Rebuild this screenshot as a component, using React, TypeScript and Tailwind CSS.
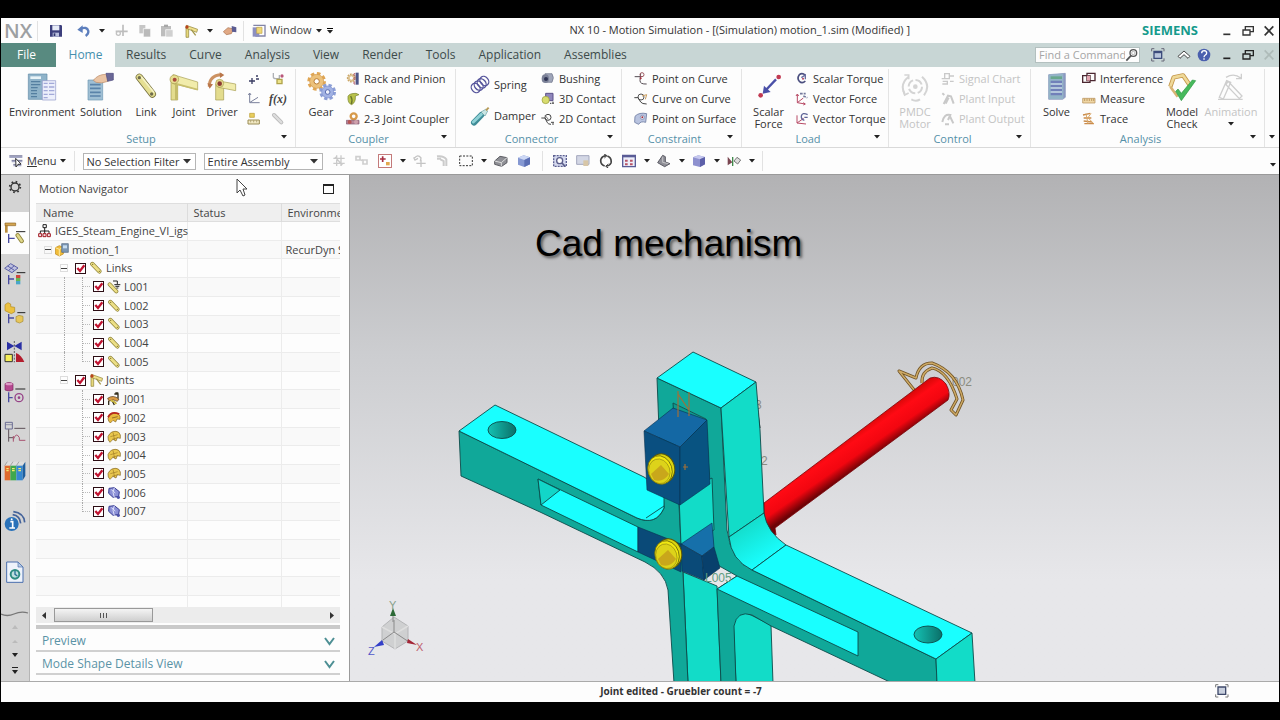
import { useState, type ReactNode } from 'react';

type TreeRow = {
    name: string;
    level: number;
    icon: string;
    env?: string;
    last?: boolean;
};

const rows: TreeRow[] = [
    { name: 'IGES_Steam_Engine_VI_igs', level: 0, icon: 'assembly' },
    { name: 'motion_1', level: 1, icon: 'motion', env: 'RecurDyn Solver' },
    { name: 'Links', level: 2, icon: 'link' },
    { name: 'L001', level: 3, icon: 'linkFixed' },
    { name: 'L002', level: 3, icon: 'link' },
    { name: 'L003', level: 3, icon: 'link' },
    { name: 'L004', level: 3, icon: 'link' },
    { name: 'L005', level: 3, icon: 'link', last: true },
    { name: 'Joints', level: 2, icon: 'joint' },
    { name: 'J001', level: 3, icon: 'jointFixed' },
    { name: 'J002', level: 3, icon: 'revoluteDriven' },
    { name: 'J003', level: 3, icon: 'revolute' },
    { name: 'J004', level: 3, icon: 'revolute' },
    { name: 'J005', level: 3, icon: 'revolute' },
    { name: 'J006', level: 3, icon: 'cylinder' },
    { name: 'J007', level: 3, icon: 'cylinder', last: true },
];

const tabs = ['Results', 'Curve', 'Analysis', 'View', 'Render', 'Tools', 'Application', 'Assemblies'];

// three drawing units per pixel
function Svg({ s, children, className = '' }: { s: number; children: ReactNode; className?: string }) {
    return (
        <svg width={s} height={s} viewBox={`0 0 ${s * 3} ${s * 3}`} fill="none" className={`shrink-0 ${className}`} aria-hidden="true">
            {children}
        </svg>
    );
}

function Arrow() {
    return (
        <svg width="6" height="4" viewBox="0 0 6 4" className="shrink-0" aria-hidden="true">
            <path d="M0 0h6L3 3.6z" fill="#222" />
        </svg>
    );
}

function Sep() {
    return <span className="h-5 w-px shrink-0 bg-[#e2e2e2]" />;
}

/* small icons, 14px */

const icons: Record<string, ReactNode> = {
    assembly: (
        <g stroke="#222" strokeWidth="3">
            <path d="M15 2h10v9H15zM20 11v12M7 28v-7h26v7M20 20v8" />
            <path d="M2 29h9v9H2zM15 29h9v9h-9zM28 29h9v9h-9z" stroke="#a01822" fill="#f7e5e5" />
        </g>
    ),
    motion: (
        <g>
            <path d="M1 14l12-6 12 5v20l-12 6-12-6z" fill="#f1bd3a" stroke="#b98313" strokeWidth="2" />
            <path d="M1 14l12 5 12-6M13 19v20" stroke="#fbe8a2" strokeWidth="3" />
            <path d="M20 2h20v26H20z" fill="#7d98b5" stroke="#51657d" strokeWidth="2" />
            <path d="M24 7h12v9H24z" fill="#c7dcf0" />
        </g>
    ),
    link: (
        <g>
            <path d="M10 9L31 31" stroke="#8d8136" strokeWidth="13" strokeLinecap="round" />
            <path d="M10 9L31 31" stroke="#ecdf86" strokeWidth="9" strokeLinecap="round" />
            <circle cx="11" cy="10" r="2" fill="#7a6d25" />
            <circle cx="31" cy="31" r="2" fill="#7a6d25" />
        </g>
    ),
    linkFixed: (
        <g>
            <path d="M8 13L28 34" stroke="#8d8136" strokeWidth="12" strokeLinecap="round" />
            <path d="M8 13L28 34" stroke="#ecdf86" strokeWidth="8" strokeLinecap="round" />
            <path d="M18 3h13v10M22 14h18M25 19h12M28 24h6" stroke="#222" strokeWidth="3" />
        </g>
    ),
    joint: (
        <g>
            <path d="M6 40V9h8v31z" fill="#e7d97c" stroke="#8d8136" strokeWidth="2" />
            <path d="M7 4l34 12-3 9L6 13z" fill="#efe08c" stroke="#8d8136" strokeWidth="2" />
            <path d="M22 17l13 17" stroke="#a3984b" strokeWidth="4" />
            <circle cx="9" cy="9" r="5" fill="#b8441e" />
        </g>
    ),
    jointFixed: (
        <g>
            <path d="M2 19q16-12 34 2l-5 7q-12-8-25-1z" fill="#d99a45" stroke="#4e3210" strokeWidth="2" />
            <path d="M5 27v12M15 25l7 14M22 6h11v13M25 3h9" stroke="#332d1b" strokeWidth="4" />
            <path d="M11 26q10 0 17 10" stroke="#cbb73f" strokeWidth="5" />
        </g>
    ),
    revolute: (
        <g>
            <path d="M3 20Q10 3 27 4q10 1 13 11v10l-9-2-4 10-9-5-9 9-5-7z" fill="#e9c74d" stroke="#80621c" strokeWidth="2" />
            <path d="M10 20l22-6M15 28l18-5M18 7l5 24" stroke="#9f7a24" strokeWidth="2" />
        </g>
    ),
    revoluteDriven: (
        <g>
            <path d="M3 23Q8 6 27 7q10 1 12 9v9l-9-1-4 9-8-5-8 8-5-6z" fill="#e9b93f" stroke="#80621c" strokeWidth="2" />
            <path d="M3 19Q12-1 37 9" stroke="#b8281d" strokeWidth="5" />
            <path d="M15 21l17-4" stroke="#6e4a17" strokeWidth="2" />
        </g>
    ),
    cylinder: (
        <g>
            <path d="M6 7l16-2 15 12-2 14-17 3L5 22z" fill="#8b90d6" stroke="#353a92" strokeWidth="3" />
            <path d="M13 11l12 10M22 5l-4 14 4 16" stroke="#dcdff8" strokeWidth="3" />
            <circle cx="34" cy="34" r="5" fill="#4b50a8" />
        </g>
    ),
    pointConstruct: <path d="M6 27h18M15 18v18M27 12h6M27 21h9" stroke="#3a3d63" strokeWidth="4" />,
    marker: (
        <g strokeWidth="4">
            <path d="M7 3v12q0 5 8 5h10V9" stroke="#aeb1b5" />
            <path d="M18 22h15v13H18z" fill="#ece38a" stroke="#b1a44c" />
            <circle cx="33" cy="12" r="5" fill="#b9577a" />
        </g>
    ),
    axes: <path d="M8 4v28h30M9 31l24-15M4 9l4-6 4 6" stroke="#7b819c" strokeWidth="3" />,
    sensor: (
        <g>
            <path d="M8 4h14v12H8z" fill="#e8ce5e" stroke="#b99a2e" strokeWidth="2" />
            <path d="M3 24h34v12H3z" fill="#f2e9c4" stroke="#9a8c55" strokeWidth="3" />
            <path d="M11 25v6M20 25v6M29 25v6" stroke="#9a8c55" strokeWidth="2" />
        </g>
    ),
    greyLink: (
        <g>
            <path d="M9 9l22 22" stroke="#b9b9b9" strokeWidth="12" strokeLinecap="round" />
            <path d="M9 9l22 22" stroke="#dedede" strokeWidth="7" strokeLinecap="round" />
        </g>
    ),
    rack: (
        <g>
            <circle cx="16" cy="18" r="10" stroke="#cba768" strokeWidth="7" strokeDasharray="5 2" />
            <circle cx="16" cy="18" r="7" stroke="#dcc18e" strokeWidth="4" />
            <path d="M29 2h9v36h-9z" fill="#4e5687" />
            <path d="M28 5h-4v6h4M28 17h-4v6h4M28 30h-4v6h4" stroke="#b56570" strokeWidth="3" />
        </g>
    ),
    cable: (
        <g>
            <path d="M6 13q4-9 24-9l9 4-11 4q2 19-11 26Q4 34 6 13z" fill="#b8c24a" stroke="#75802a" strokeWidth="2" />
            <path d="M14 12q7 12 2 24" stroke="#68742a" strokeWidth="4" />
        </g>
    ),
    coupler: (
        <g>
            <circle cx="23" cy="13" r="9" stroke="#d79a4b" strokeWidth="7" />
            <path d="M1 25h38v11H1z" fill="#b8869a" stroke="#7f566d" strokeWidth="2" />
            <circle cx="11" cy="30" r="6" fill="#b75555" />
            <circle cx="30" cy="30" r="6" fill="#cfa1ac" />
        </g>
    ),
    bushing: (
        <g>
            <path d="M12 5h21q8 12 0 26H13z" fill="#9fa5b9" stroke="#6b7186" strokeWidth="2" />
            <ellipse cx="13" cy="20" rx="11" ry="13" fill="#7b8197" />
            <circle cx="15" cy="21" r="6" fill="#2f3454" />
        </g>
    ),
    contact3d: (
        <g>
            <path d="M14 4h22v22H14z" fill="#8f86bb" stroke="#5b5189" strokeWidth="3" />
            <circle cx="14" cy="24" r="11" fill="#d8dc6f" stroke="#949936" strokeWidth="2" />
            <path d="M27 34h4M34 34h4M36 29v6" stroke="#333" strokeWidth="3" />
        </g>
    ),
    contact2d: (
        <g stroke="#444" strokeWidth="3">
            <circle cx="21" cy="16" r="9" />
            <path d="M1 18h11l7 14q3 5 11 5M30 31h9M33 36h6" />
            <path d="M12 10l10 12" stroke="#777" />
        </g>
    ),
    pointCurve: (
        <g strokeWidth="3">
            <path d="M2 14h20M20 4l-2 22q0 11 20 10" stroke="#544b52" />
            <circle cx="24" cy="8" r="6" stroke="#9d5a62" />
            <circle cx="20" cy="19" r="3" fill="#b02a39" />
        </g>
    ),
    curveCurve: (
        <g strokeWidth="3">
            <circle cx="21" cy="15" r="9" stroke="#555" />
            <path d="M1 17h11l8 13q4 6 18 6" stroke="#444" />
            <path d="M24 12l14-4-4 14" stroke="#c99b5b" />
        </g>
    ),
    pointSurface: (
        <g>
            <path d="M3 13Q15 0 38 5l-3 26q-15-5-21 6L2 31z" fill="#b9c4e0" stroke="#7f8cae" strokeWidth="3" />
            <circle cx="25" cy="16" r="6" fill="#fff" stroke="#6d79a3" strokeWidth="2" />
            <circle cx="25" cy="16" r="3" fill="#9c2c41" />
        </g>
    ),
    scalarTorque: (
        <g strokeWidth="5">
            <path d="M31 10Q22 1 13 8q-8 10 0 20 9 8 18-1" stroke="#4b4f7f" />
            <path d="M19 17l12-8v13" stroke="#6a6ea1" strokeWidth="4" />
            <circle cx="24" cy="20" r="3" fill="#b4435c" />
        </g>
    ),
    vectorForce: (
        <g strokeWidth="3">
            <path d="M7 8v24l23 4M7 32l18-14" stroke="#b84b66" />
            <path d="M3 12l4-6 4 6M25 32l6 4-6 3" stroke="#b84b66" />
            <path d="M15 5h17M25 12l12 5" stroke="#74799c" strokeWidth="5" strokeDasharray="8 3" />
        </g>
    ),
    vectorTorque: (
        <g strokeWidth="3">
            <path d="M6 10v23l27 3M6 33l20-14" stroke="#b84b66" />
            <path d="M38 8Q22 0 19 12q-1 10 9 13M28 16h10" stroke="#5f6598" strokeWidth="4" />
        </g>
    ),
    signal: <path d="M2 20h9V5h14v15H13M25 12h14M5 28h14v8H4M27 28h11" stroke="#c9c9c9" strokeWidth="4" />,
    plantIn: <path d="M4 4l6 5M8 36l13-25 9 2 8 22M14 35l9-18" stroke="#c9c9c9" strokeWidth="6" />,
    plantOut: <path d="M4 30Q9 4 28 9l-7 15M25 9l12 25M12 37h12" stroke="#c9c9c9" strokeWidth="6" />,
    interference: (
        <g strokeWidth="4">
            <path d="M2 11h22v20H2z" stroke="#4b2731" />
            <path d="M15 4h24v22H15z" stroke="#4b2731" />
            <path d="M15 11h9v15h-9z" fill="#e4a6b1" />
        </g>
    ),
    measure: (
        <g>
            <path d="M2 19h37v14H2z" fill="#efd6a4" stroke="#b28b52" strokeWidth="2" />
            <path d="M8 20v7M15 20v7M22 20v7M29 20v7M35 20v7" stroke="#a87b3e" strokeWidth="2" />
        </g>
    ),
    trace: (
        <g stroke="#c98b4b" strokeWidth="4">
            <path d="M3 9l22-5M5 18h23M5 27l25 3M7 35h29" />
            <path d="M12 5l6 30M27 4l-9 13 17 18" stroke="#dba968" strokeWidth="3" />
        </g>
    ),
};

function Small({ name }: { name: string }) {
    return <Svg s={14}>{icons[name]}</Svg>;
}

/* large ribbon icons, 30px */

const big: Record<string, ReactNode> = {
    environment: (
        <g>
            <path d="M4 6h56v76H4z" fill="#8fb3c9" stroke="#628ca8" strokeWidth="2" />
            <path d="M10 13h32v8H10z" fill="#e8f3f7" />
            <path d="M12 29h28M12 38h28M12 47h20M12 56h18M12 65h18M12 74h18" stroke="#547fa0" strokeWidth="4" />
            <path d="M46 26h40v58H46z" fill="#eceffb" stroke="#8f97c9" strokeWidth="2" />
            <path d="M50 34h12M66 34h16M50 45h12M66 45h16M50 56h12M66 56h16M50 67h12M66 67h16M50 77h12" stroke="#a2a9d8" strokeWidth="4" />
        </g>
    ),
    solution: (
        <g>
            <path d="M6 24h44v60H6z" fill="#9fbfd4" stroke="#6e98b4" strokeWidth="2" />
            <path d="M12 38h32M12 49h32M12 61h32M12 72h32" stroke="#5a83a9" strokeWidth="5" />
            <path d="M22 25q14-18 37-18l11 7-4 14q-20 8-36 3z" fill="#eac4a4" stroke="#b98a67" strokeWidth="2" />
            <path d="M60 4h22v20l-17 4z" fill="#6a6796" stroke="#4b487b" strokeWidth="2" />
        </g>
    ),
    link: (
        <g>
            <path d="M25 16L64 66" stroke="#77713f" strokeWidth="22" strokeLinecap="round" />
            <path d="M25 16L64 66" stroke="#e5df92" strokeWidth="17" strokeLinecap="round" />
            <path d="M32 16L68 60" stroke="#f5f2c4" strokeWidth="5" strokeLinecap="round" />
            <circle cx="25" cy="17" r="5" fill="#6f6c4c" />
            <circle cx="62" cy="66" r="5" fill="#6f6c4c" />
        </g>
    ),
    joint: (
        <g>
            <path d="M6 84V22h20v62z" fill="#e3dc8e" stroke="#a59c4e" strokeWidth="2" />
            <path d="M18 84V30h8v54z" fill="#c5bc69" />
            <path d="M12 8l74 22v24L10 34z" fill="#f1ecab" stroke="#a59c4e" strokeWidth="2" />
            <path d="M12 30l74 20v5L10 35z" fill="#c9c06d" />
            <circle cx="16" cy="22" r="13" fill="#e7dd91" stroke="#a59c4e" strokeWidth="2" />
            <circle cx="17" cy="23" r="6" fill="#a94a3b" />
        </g>
    ),
    driver: (
        <g>
            <path d="M26 84V36h24v48z" fill="#e3dc8e" stroke="#a59c4e" strokeWidth="2" />
            <path d="M30 26l56 10v20L34 46z" fill="#f1ecab" stroke="#a59c4e" strokeWidth="2" />
            <circle cx="38" cy="34" r="12" fill="#e7dd91" stroke="#a59c4e" strokeWidth="2" />
            <circle cx="38" cy="35" r="7" fill="#8c3a33" />
            <path d="M7 44Q6 10 44 8" stroke="#cc9262" strokeWidth="9" />
            <path d="M1 34l7 16 10-13zM38 1l14 8-13 9z" fill="#b9764a" />
        </g>
    ),
    gear: (
        <g>
            <circle cx="32" cy="28" r="22" stroke="#e0a654" strokeWidth="12" strokeDasharray="10 7.28" />
            <circle cx="32" cy="28" r="21" fill="#ecc17b" stroke="#d19a50" strokeWidth="2" />
            <circle cx="32" cy="28" r="8" fill="#fff" stroke="#b97d37" strokeWidth="3" />
            <circle cx="65" cy="60" r="19" stroke="#8d9fd6" strokeWidth="12" strokeDasharray="9 5.92" />
            <circle cx="65" cy="60" r="18" fill="#a2b2e3" stroke="#7b8fcf" strokeWidth="2" />
            <circle cx="65" cy="60" r="7" fill="#eef1fc" stroke="#5d70b2" strokeWidth="3" />
        </g>
    ),
    scalar: (
        <g>
            <path d="M66 22L33 57" stroke="#4a50a8" strokeWidth="7" />
            <path d="M26 65l4-24 20 19z" fill="#4a50a8" />
            <circle cx="74" cy="15" r="7" fill="#c23a52" />
            <circle cx="20" cy="70" r="7" fill="#c23a52" />
        </g>
    ),
    pmdc: (
        <g stroke="#d4d4d4" strokeWidth="6">
            <path d="M26 14Q-2 36 14 66M66 14Q94 40 72 70M34 82Q48 90 60 82" />
            <circle cx="46" cy="44" r="20" strokeDasharray="24 7.4" />
            <circle cx="46" cy="44" r="4" fill="#d4d4d4" />
            <path d="M26 22V9H13M10 56l4 13 12-6" strokeWidth="5" />
        </g>
    ),
    solve: (
        <g>
            <path d="M20 8l50-4v72l-8 6H20z" fill="#8e9bc3" stroke="#8493ba" strokeWidth="2" />
            <path d="M20 8l44-3v76H20z" fill="#93b4c7" />
            <path d="M26 13h34v8H26z" fill="#68a78d" />
            <path d="M26 30h34M26 42h34M26 54h34M26 66h34" stroke="#7180b9" strokeWidth="7" />
            <path d="M26 36h34M26 48h34M26 60h34" stroke="#dce6f4" strokeWidth="3" />
        </g>
    ),
    check: (
        <g>
            <path d="M10 44L20 16 48 10 70 42" stroke="#c3964a" strokeWidth="13" strokeLinejoin="round" />
            <path d="M10 44L20 16 48 10 70 42" stroke="#efd998" strokeWidth="8" strokeLinejoin="round" />
            <path d="M10 44L32 74" stroke="#d8b573" strokeWidth="8" />
            <path d="M26 58l17 28L86 26 76 24 43 64 33 51z" fill="#47b95c" stroke="#2f9a45" strokeWidth="2" />
        </g>
    ),
    animation: (
        <g stroke="#cecece" strokeWidth="4">
            <path d="M10 76l22-50 12 5-22 50zM36 28l42 44-8 8-40-42z" />
            <path d="M30 16q24-14 44 2M76 5v15H60M6 82h74" />
        </g>
    ),
};

function BigButton({ icon, label, width, disabled, menu }: { icon: string; label: string; width: string; disabled?: boolean; menu?: boolean }) {
    return (
        <button disabled={disabled} className={`flex shrink-0 flex-col items-center pt-[3px] leading-3 whitespace-pre-line ${width} ${disabled ? 'text-[#c4c4c4]' : ''}`}>
            <Svg s={30} className="mb-1">{big[icon]}</Svg>
            {label}
            {menu && <span className="mt-1 text-black"><Arrow /></span>}
        </button>
    );
}

function RowButton({ icon, label, disabled }: { icon: string; label: string; disabled?: boolean }) {
    return (
        <button disabled={disabled} className={`flex h-5 items-center gap-1 whitespace-nowrap ${disabled ? 'text-[#c4c4c4]' : ''}`}>
            <Small name={icon} />
            {label}
        </button>
    );
}

function Group({ title, width, children }: { title: string; width: string; children: ReactNode }) {
    return (
        <section className={`flex shrink-0 flex-col border-r border-[#e4e4e4] ${width}`}>
            <div className="flex h-[63px] items-start">{children}</div>
            <div className="flex h-4 items-center">
                <h2 className="flex-1 text-center text-[#5590a8]">{title}</h2>
                <button aria-label={`${title} options`} className="flex h-4 w-[14px] items-start pt-1"><Arrow /></button>
            </div>
        </section>
    );
}

function TitleBar() {
    return (
        <header className="flex h-[25px] shrink-0 items-center bg-[#fdfdfd]">
            <span className="w-9 pl-[3px] text-[20px] font-semibold text-[#9da0a2]">NX</span>
            <Sep />
            <div className="flex items-center">
                <button aria-label="Save" className="flex w-9 justify-center">
                    <Svg s={14}><path d="M3 3h34l2 3v32H3z" fill="#3c3f7c" /><path d="M10 4h21v15H10z" fill="#e6ebf7" /><path d="M11 26h19v12H11z" fill="#b9bfdd" /><path d="M14 28h5v8h-5z" fill="#2f3269" /></Svg>
                </button>
                <button aria-label="Undo" className="flex w-5 justify-center">
                    <Svg s={14}><path d="M10 15q20-9 24 6 1 9-8 15" stroke="#5d7fbd" strokeWidth="7" /><path d="M1 17L17 4v23z" fill="#5d7fbd" /></Svg>
                </button>
                <button aria-label="Undo list" className="flex w-4 justify-center"><Arrow /></button>
                <button aria-label="Cut" className="flex w-6 justify-center">
                    <Svg s={14}><path d="M24 2v34M2 22h36" stroke="#bdbdbd" strokeWidth="5" /><circle cx="10" cy="28" r="6" stroke="#c2c2c2" strokeWidth="4" /></Svg>
                </button>
                <button aria-label="Copy" className="flex w-[22px] justify-center">
                    <Svg s={14}><path d="M4 3h18v25H4z" fill="#c6c6c6" /><path d="M16 14h22v25H16z" fill="#bababa" stroke="#fff" strokeWidth="2" /></Svg>
                </button>
                <button aria-label="Paste" className="flex w-[22px] justify-center">
                    <Svg s={14}><path d="M3 6h30v31H3z" fill="#bdbdbd" /><path d="M12 2h12v7H12z" fill="#a7a7a7" /><path d="M17 17h22v22H17z" fill="#d0d0d0" stroke="#fff" strokeWidth="2" /></Svg>
                </button>
                <button aria-label="Joint" className="flex w-[26px] justify-center"><Small name="joint" /></button>
                <button aria-label="Joint list" className="flex w-3 justify-center"><Arrow /></button>
                <button aria-label="Touch" className="flex w-[27px] justify-center">
                    <Svg s={14}><path d="M1 23l14-12 17 4-7 14-15 3z" fill="#e1a985" stroke="#a8714f" strokeWidth="2" /><path d="M26 6l14 4v15l-13-2z" fill="#5b5c92" /></Svg>
                </button>
            </div>
            <Sep />
            <button className="flex items-center gap-1 pl-2 text-[11px] text-[#444]">
                <Svg s={14}><path d="M4 4h35v32H10" stroke="#8284a6" strokeWidth="4" /><path d="M2 10h20v28H2z" fill="#8c8fc0" /><path d="M14 10h16v18H14z" fill="#f0d876" stroke="#bfa145" strokeWidth="2" /></Svg>
                Window <Arrow />
            </button>
            <button aria-label="Customize" className="flex w-4 flex-col items-center gap-px">
                <span className="h-px w-[6px] bg-black" /><Arrow />
            </button>
            <h1 className="flex-1 text-center text-[11px] text-[#333]">NX 10 - Motion Simulation - [(Simulation) motion_1.sim (Modified) ]</h1>
            <strong className="text-[13px] text-[#159a8c]">SIEMENS</strong>
            <div className="flex items-center pl-[18px] text-[#333]">
                <WindowButtons />
            </div>
        </header>
    );
}

function WindowButtons({ dim }: { dim?: boolean }) {
    return (
        <>
            <button aria-label="Minimize" className="flex w-[21px] justify-center">
                <Svg s={12}><path d="M7 28h21" stroke="currentColor" strokeWidth="5" /></Svg>
            </button>
            <button aria-label="Restore" className="flex w-[21px] justify-center">
                <Svg s={12}><path d="M3 15h21v15H3zM10 14V5h24v15h-9" stroke="currentColor" strokeWidth="4" /></Svg>
            </button>
            <button aria-label="Close" className={`flex w-[21px] justify-center ${dim ? 'text-[#aebbb9]' : ''}`}>
                <Svg s={12}><path d="M5 4l26 27M31 4L5 31" stroke="currentColor" strokeWidth="5" /></Svg>
            </button>
        </>
    );
}

function TabBar() {
    return (
        <nav className="flex h-6 shrink-0 bg-[#c8d6d5] text-[12px] text-[#3d4a4a]">
            <button className="w-[55px] bg-[#588a80] pr-1 text-white">File</button>
            <button className="w-[59px] bg-[#fdfdfd] text-[#4590ae]">Home</button>
            {tabs.map((tab) => (
                <button key={tab} className="pr-3 pl-[11px]">{tab}</button>
            ))}
            <div className="ml-auto flex items-center">
                <label className="flex h-4 w-[105px] items-center border border-[#b3c0bf] bg-[#fdfdfd] pl-[3px] text-[11px]">
                    <input aria-label="Find a Command" placeholder="Find a Command" className="min-w-0 flex-1 outline-none placeholder:text-[#a5a5a5]" />
                    <Svg s={14}><circle cx="25" cy="15" r="10" stroke="#555" strokeWidth="4" /><circle cx="25" cy="15" r="5" stroke="#999" strokeWidth="2" /><path d="M18 23L4 38" stroke="#555" strokeWidth="5" /></Svg>
                </label>
                <button aria-label="Full Screen" className="flex w-9 justify-center">
                    <Svg s={14}><path d="M2 10V2h8M31 2h8v8M39 31v8h-8M10 39H2v-8" stroke="#667" strokeWidth="3" /><path d="M9 10h23v21H9z" fill="#b9c6dc" stroke="#3d4d7c" strokeWidth="4" /><path d="M9 13h23" stroke="#3d4d7c" strokeWidth="5" /></Svg>
                </button>
                <button aria-label="Minimize Ribbon" className="flex w-4 justify-center">
                    <Svg s={14}><path d="M3 25L21 9l18 16-6 6-12-11L9 31z" fill="#fdfdfd" stroke="#444" strokeWidth="3" /></Svg>
                </button>
                <button aria-label="Help" className="flex w-6 justify-center">
                    <Svg s={14}><circle cx="21" cy="21" r="19" fill="#4a5fae" /><path d="M14 16q0-8 8-8 7 1 7 7 0 4-4 6t-4 7M21 31v4" stroke="#fff" strokeWidth="4" /></Svg>
                </button>
                <div className="flex text-[#222]"><WindowButtons dim /></div>
            </div>
        </nav>
    );
}

function Ribbon() {
    return (
        <div className="flex h-[81px] shrink-0 overflow-hidden border-b border-[#d9d9d9] bg-[#fdfdfd] pt-[2px] text-[11px] text-[#333]">
            <Group title="Setup" width="w-[295px]">
                <BigButton icon="environment" label="Environment" width="ml-[7px] w-[68px]" />
                <BigButton icon="solution" label="Solution" width="w-[50px]" />
                <BigButton icon="link" label="Link" width="w-10" />
                <BigButton icon="joint" label="Joint" width="w-9" />
                <BigButton icon="driver" label="Driver" width="w-10" />
                <div className="ml-[2px] grid grid-cols-2 gap-x-1">
                    {['pointConstruct', 'marker', 'axes', 'fx', 'sensor', 'greyLink'].map((name) => (
                        <button key={name} aria-label={name} className="flex h-5 w-5 items-center justify-center">
                            {name === 'fx' ? <i className="font-['Liberation_Serif',serif] text-[12px] font-bold text-[#444]">f(x)</i> : <Small name={name} />}
                        </button>
                    ))}
                </div>
            </Group>
            <Group title="Coupler" width="w-[160px]">
                <BigButton icon="gear" label="Gear" width="w-[50px]" />
                <div>
                    <RowButton icon="rack" label="Rack and Pinion" />
                    <RowButton icon="cable" label="Cable" />
                    <RowButton icon="coupler" label="2-3 Joint Coupler" />
                </div>
            </Group>
            <Group title="Connector" width="w-[166px]">
                <div className="flex w-[85px] flex-col pl-[14px]">
                    <button className="flex h-8 items-center gap-1">
                        <Svg s={20}><g stroke="#55549b" strokeWidth="4"><ellipse cx="17" cy="39" rx="12" ry="15" transform="rotate(-40 17 39)" /><ellipse cx="26" cy="32" rx="12" ry="15" transform="rotate(-40 26 32)" /><ellipse cx="35" cy="25" rx="12" ry="15" transform="rotate(-40 35 25)" /><ellipse cx="43" cy="18" rx="12" ry="15" transform="rotate(-40 43 18)" /></g></Svg>
                        Spring
                    </button>
                    <button className="flex h-[30px] items-center gap-1">
                        <Svg s={20}><path d="M12 50L34 27" stroke="#3f8c97" strokeWidth="18" strokeLinecap="round" /><path d="M10 48L34 25" stroke="#8fd1d6" strokeWidth="9" strokeLinecap="round" /><path d="M33 18l12 12 8-15-6-5z" fill="#c9e5e3" stroke="#679ba0" strokeWidth="2" /><path d="M48 13l8-8" stroke="#b89a56" strokeWidth="6" /></Svg>
                        Damper
                    </button>
                </div>
                <div>
                    <RowButton icon="bushing" label="Bushing" />
                    <RowButton icon="contact3d" label="3D Contact" />
                    <RowButton icon="contact2d" label="2D Contact" />
                </div>
            </Group>
            <Group title="Constraint" width="w-[120px]">
                <div className="pl-3">
                    <RowButton icon="pointCurve" label="Point on Curve" />
                    <RowButton icon="curveCurve" label="Curve on Curve" />
                    <RowButton icon="pointSurface" label="Point on Surface" />
                </div>
            </Group>
            <Group title="Load" width="w-[147px]">
                <BigButton icon="scalar" label={'Scalar\nForce'} width="w-[53px]" />
                <div>
                    <RowButton icon="scalarTorque" label="Scalar Torque" />
                    <RowButton icon="vectorForce" label="Vector Force" />
                    <RowButton icon="vectorTorque" label="Vector Torque" />
                </div>
            </Group>
            <Group title="Control" width="w-[142px]">
                <BigButton icon="pmdc" label={'PMDC\nMotor'} width="w-[52px]" disabled />
                <div>
                    <RowButton icon="signal" label="Signal Chart" disabled />
                    <RowButton icon="plantIn" label="Plant Input" disabled />
                    <RowButton icon="plantOut" label="Plant Output" disabled />
                </div>
            </Group>
            <Group title="Analysis" width="w-[234px]">
                <BigButton icon="solve" label="Solve" width="w-[51px]" />
                <div className="w-[79px]">
                    <RowButton icon="interference" label="Interference" />
                    <RowButton icon="measure" label="Measure" />
                    <RowButton icon="trace" label="Trace" />
                </div>
                <BigButton icon="check" label={'Model\nCheck'} width="w-[42px]" />
                <BigButton icon="animation" label="Animation" width="w-[56px]" disabled menu />
            </Group>
            <div className="flex flex-1 items-end justify-center pb-2"><Arrow /></div>
        </div>
    );
}

function FilterSelect({ label, options, width }: { label: string; options: string[]; width: string }) {
    return (
        <div className={`relative flex h-[17px] items-center border border-[#b5b5b5] ${width}`}>
            <select aria-label={label} className="h-full w-full appearance-none bg-white pl-[3px] text-[11px] leading-[15px] outline-none">
                {options.map((o) => <option key={o}>{o}</option>)}
            </select>
            <svg width="8" height="5" viewBox="0 0 8 5" className="pointer-events-none absolute right-1" aria-hidden="true"><path d="M0 0h8L4 4.6z" fill="#333" /></svg>
        </div>
    );
}

const toolIcons: { name: string; menu?: boolean; sep?: boolean; art: ReactNode }[] = [
    { name: 'Snap', art: <path d="M14 4v32M27 4v32M4 13h34M4 28h34M9 9l22 24" stroke="#cacaca" strokeWidth="4" /> },
    { name: 'Chain', art: <path d="M3 8h12v10H3zM16 17l9 4M24 18h12v12H24z" stroke="#cfcfcf" strokeWidth="5" /> },
    { name: 'Snap Point', menu: true, art: <g><path d="M1 1h40v40H1z" fill="#fff" stroke="#b86161" strokeWidth="3" /><path d="M14 7v17M6 15h17" stroke="#a82f41" strokeWidth="5" /><path d="M24 24h11v10H24z" fill="#e3a84d" /></g> },
    { name: 'Point', art: <path d="M3 14Q14-2 24 12l-2 10M10 28h28M24 17v22M2 10l4 8 9-5" stroke="#c4c4c4" strokeWidth="4" /> },
    { name: 'Curve', art: <path d="M3 7q20-3 28 9v20M13 16l10 5v15M3 14h12" stroke="#cbcbcb" strokeWidth="6" /> },
    { name: 'Rectangle Select', menu: true, art: <path d="M2 6h38v29H2z" stroke="#333" strokeWidth="3" strokeDasharray="6 4" /> },
    { name: 'Shading', art: <g><path d="M2 21L18 7l21 4v15L23 37 2 31z" fill="#8f9096" stroke="#5c5d63" strokeWidth="3" /><path d="M2 21l20 5 17-15M22 26v11" stroke="#ddd" strokeWidth="3" /></g> },
    { name: 'Body', sep: true, art: <g><path d="M3 11l17-7 19 6v21L22 39 3 32z" fill="#8598d2" /><path d="M3 11l17-7 19 6-17 8z" fill="#cdd8f5" /><path d="M22 18l17-8v21l-17 8z" fill="#5b6fb4" /></g> },
    { name: 'Fit', art: <g><path d="M2 5h38v32H2z" fill="#d6daef" stroke="#5d6192" strokeWidth="4" strokeDasharray="6 3" /><circle cx="20" cy="20" r="9" fill="#fff" stroke="#5b5e8a" strokeWidth="4" /><path d="M27 27l9 10" stroke="#5b5e8a" strokeWidth="5" /></g> },
    { name: 'Zoom', art: <g><path d="M2 5h37v26H2z" fill="#d3d7e5" stroke="#a3a8bd" strokeWidth="3" /><path d="M22 19h15v17H22z" fill="#d7c6a7" /></g> },
    { name: 'Rotate', art: <g stroke="#444" strokeWidth="5"><path d="M17 36Q2 30 6 15q4-9 15-10M25 6q14 5 11 21-4 9-15 9" /><path d="M15 0l9 5-8 7M28 42l-8-5 8-7" strokeWidth="3" /></g> },
    { name: 'Layout', menu: true, art: <g><path d="M2 4h38v34H2z" fill="#eceefa" stroke="#5a5c96" strokeWidth="4" /><path d="M2 7h38" stroke="#5a5c96" strokeWidth="6" /><path d="M9 17h8v6H9zM24 17h8v6h-8zM9 28h8v6H9zM24 28h8v6h-8z" fill="#b85465" /></g> },
    { name: 'Section', menu: true, art: <g><path d="M2 26L17 4l8 4v16l14 5-16 9z" fill="#8f8f97" stroke="#5c5c65" strokeWidth="3" /><path d="M17 8v17l17 4" stroke="#e0e0e0" strokeWidth="2" /></g> },
    { name: 'Rendering Style', menu: true, art: <g><path d="M3 10l16-6 20 5v22l-15 8-21-5z" fill="#8e91cf" /><path d="M3 10l16-6 20 5-15 7z" fill="#c6c8ee" /><path d="M24 16l15-7v22l-15 8z" fill="#5d60a9" /></g> },
    { name: 'Clip', menu: true, art: <g><path d="M2 8v26l14-9z" fill="#7a4651" /><path d="M17 9v27" stroke="#3f8a4a" strokeWidth="4" /><path d="M21 21l9-11 11 8-9 12z" fill="#ddd" stroke="#777" strokeWidth="3" /></g> },
];

function SelectionBar() {
    return (
        <div className="flex h-[27px] shrink-0 items-center border-b border-[#9a9a9a] bg-[#fdfdfd] pl-2 text-[11px] text-[#333]">
            <button className="flex items-center gap-[3px]">
                <Svg s={15}><path d="M1 5h39v7H1zM8 19h32v6H8zM13 31h24v6H13z" fill="#a5a8c5" /><path d="M1 5h39M8 19h32M13 31h24" stroke="#5c5e83" strokeWidth="2" /><path d="M20 13l16 17-9 1-6 8z" fill="#fff" stroke="#333" strokeWidth="3" /></Svg>
                <span><u>M</u>enu</span>
                <Arrow />
            </button>
            <span className="mx-2 flex"><Sep /></span>
            <div className="flex gap-2">
                <FilterSelect label="Type Filter" options={['No Selection Filter', 'Joint', 'Link']} width="w-[113px]" />
                <FilterSelect label="Selection Scope" options={['Entire Assembly', 'Within Work Part Only']} width="w-[119px]" />
            </div>
            <div className="ml-[5px] flex items-center">
                {toolIcons.map((t) => (
                    <div key={t.name} className="flex items-center">
                        <button aria-label={t.name} className="flex w-[23px] justify-center"><Svg s={14}>{t.art}</Svg></button>
                        {t.menu && <button aria-label={`${t.name} list`} className="flex w-3 justify-center"><Arrow /></button>}
                        {t.sep && <span className="mx-[6px] flex"><Sep /></span>}
                    </div>
                ))}
                <span className="ml-1 flex"><Sep /></span>
            </div>
            <span className="ml-auto pt-2 pr-[3px]"><Arrow /></span>
        </div>
    );
}

function SideBar() {
    return (
        <aside className="flex w-[29px] shrink-0 flex-col items-center border-r border-[#b5b5b5] bg-[#d4d4d4]">
            <button aria-label="Settings" className="flex h-[37px] items-start justify-center pt-[5px]">
                <Svg s={14}><circle cx="21" cy="21" r="12" stroke="#333" strokeWidth="4" /><circle cx="21" cy="21" r="16" stroke="#333" strokeWidth="5" strokeDasharray="5 7.56" /></Svg>
            </button>
            <button aria-label="Motion Navigator" className="flex h-[42px] w-full items-center justify-center bg-[#fdfdfd]">
                <Svg s={22}><path d="M3 32V5h8v27z" fill="#b98d3d" /><path d="M3 3h32v8H3z" fill="#d3a552" stroke="#8f6523" strokeWidth="2" /><path d="M14 36v27M14 49h18" stroke="#474aa0" strokeWidth="4" /><path d="M36 29h28" stroke="#222" strokeWidth="3" /><path d="M41 40l12 17" stroke="#8d8136" strokeWidth="13" strokeLinecap="round" /><path d="M41 40l12 17" stroke="#dfd78a" strokeWidth="8" strokeLinecap="round" /></Svg>
            </button>
            <button aria-label="Simulation Navigator" className="flex h-[39px] items-center">
                <Svg s={22}><path d="M2 16L20 2l22 13-18 14zM11 9l20 13M31 8L13 23" stroke="#5b60a8" strokeWidth="3" fill="#bfc1df" /><path d="M14 36v28M14 48h16" stroke="#474aa0" strokeWidth="4" /><path d="M38 29h26" stroke="#222" strokeWidth="3" /><path d="M36 36h13v9H36z" fill="#cf493d" /><path d="M36 45h13v9H36z" fill="#66b553" /><path d="M36 54h13v10H36z" fill="#49a6c9" /></Svg>
            </button>
            <button aria-label="Assembly Navigator" className="flex h-[39px] items-center">
                <Svg s={22}><path d="M3 8l9-6 8 4v8l12 2v14l-10 5-19-9z" fill="#ecc13f" stroke="#b18a20" strokeWidth="2" /><path d="M14 36v28M14 48h16" stroke="#474aa0" strokeWidth="4" /><path d="M40 32h24" stroke="#222" strokeWidth="3" /><path d="M36 44l9-4 12 3v15l-10 5-11-4z" fill="#e7c65a" stroke="#a58b35" strokeWidth="2" /></Svg>
            </button>
            <button aria-label="Constraint Navigator" className="flex h-10 items-center">
                <Svg s={22}><path d="M9 2l22 13L9 28zM53 2L31 15l22 13z" fill="#2a2fa4" /><path d="M31 0v64" stroke="#222" strokeWidth="2" strokeDasharray="6 4" /><path d="M3 40h22v22H3z" fill="#f5ee58" stroke="#333" strokeWidth="3" /><path d="M36 36v27h25Q52 42 36 36z" fill="#b31d2d" /></Svg>
            </button>
            <button aria-label="Part Navigator" className="flex h-10 items-center">
                <Svg s={22}><path d="M3 8q12-8 24 0v19q-12 6-24 0z" fill="#b5488f" stroke="#7d2662" strokeWidth="2" /><ellipse cx="15" cy="9" rx="11" ry="4" fill="#dd9bc6" /><path d="M14 34v30M14 50h12" stroke="#474aa0" strokeWidth="4" /><path d="M34 24h30" stroke="#222" strokeWidth="3" /><circle cx="45" cy="50" r="12" stroke="#964287" strokeWidth="4" /><circle cx="45" cy="50" r="4" fill="#964287" /></Svg>
            </button>
            <button aria-label="Results" className="flex h-[39px] items-center">
                <Svg s={22}><path d="M4 4h21v20H4z" stroke="#6a6d93" strokeWidth="3" /><path d="M4 11h21" stroke="#6a6d93" strokeWidth="2" /><path d="M31 22h33M14 25v37M14 50h14" stroke="#5d5057" strokeWidth="3" /><path d="M28 62V45M28 55Q37 32 46 50v8h18" stroke="#a85270" strokeWidth="3" /></Svg>
            </button>
            <button aria-label="Reuse Library" className="flex h-10 items-center">
                <Svg s={22}><path d="M2 16L10 5h54l-8 11v45H2z" fill="#ddd" /><path d="M2 17h17v44H2z" fill="#df6a2d" /><path d="M19 17h18v44H19z" fill="#3fa84d" /><path d="M37 17h19v44H37z" fill="#3688cf" /><path d="M56 17l8-12v43l-8 13z" fill="#1e5f9e" /><path d="M2 17l8-12M19 17l8-12M37 17l8-12" stroke="#888" strokeWidth="2" /><path d="M7 26h7M24 26h8M43 26h8M7 32h7M24 32h8M43 32h8" stroke="#f5e96b" strokeWidth="4" /></Svg>
            </button>
            <button aria-label="Information" className="flex h-[60px] items-center">
                <Svg s={22}><circle cx="23" cy="42" r="21" fill="#2a72b9" /><path d="M19 35h7v19M16 54h17" stroke="#fff" strokeWidth="5" /><circle cx="23" cy="28" r="3" fill="#fff" /><path d="M26 14q22 3 24 26M28 5q32 4 34 32" stroke="#44639a" strokeWidth="5" /></Svg>
            </button>
            <button aria-label="History" className="flex h-[42px] items-center">
                <Svg s={22}><path d="M8 3h34l15 15v46H8z" fill="#eef3fb" stroke="#4a6fae" strokeWidth="3" /><path d="M42 3v15h15z" fill="#b9cbe6" stroke="#4a6fae" strokeWidth="2" /><circle cx="33" cy="40" r="13" fill="#bde0df" stroke="#2d8c81" strokeWidth="6" /><path d="M33 30v10l7 5" stroke="#286f96" strokeWidth="4" /></Svg>
            </button>
            <div className="mt-4 flex w-full flex-col items-center">
                <svg width="28" height="8" viewBox="0 0 28 8" fill="none" aria-hidden="true"><path d="M0 5q6 3 13 0t14-1" stroke="#777" strokeWidth="1.3" /></svg>
                <svg width="8" height="62" viewBox="0 0 8 62" aria-hidden="true">
                    <path d="M1 12h6L4 8zM1 26h6L4 23z" fill="#bbb" />
                    <path d="M1 36h6L4 40zM1 53h6L4 57zM1 50h6v1H1z" fill="#222" />
                </svg>
            </div>
        </aside>
    );
}

function TreeCheck({ name }: { name: string }) {
    const [on, setOn] = useState(true);
    return (
        <span className="relative flex h-[11px] w-[11px] shrink-0">
            <input type="checkbox" id={`chk-${name}`} checked={on} onChange={() => setOn(!on)} className="h-[11px] w-[11px] appearance-none border border-[#2c0d14] bg-white" />
            {on && <svg width="11" height="11" viewBox="0 0 33 33" fill="none" className="pointer-events-none absolute inset-0" aria-hidden="true"><path d="M7 15l8 9L28 7" stroke="#c01431" strokeWidth="7" /></svg>}
        </span>
    );
}

const indents = ['pl-[2px]', 'pl-2', 'pl-6', 'pl-[43px]'];

function NavigatorRow({ row }: { row?: TreeRow }) {
    return (
        <tr className="border-b border-[#ececec] odd:bg-[#fdfdfd] even:bg-[#f9f9f9]">
            <td className="border-r border-[#ececec] p-0">
                <div className={`relative flex h-[17px] items-center gap-[3px] whitespace-nowrap ${row ? indents[row.level] : ''}`}>
                    {row?.level === 3 && (
                        <>
                            {row.icon.startsWith('link') && <span className="absolute -top-px left-7 h-5 border-l border-dotted border-[#aaa]" />}
                            <span className="absolute top-2 left-[46px] w-2 border-t border-dotted border-[#bbb]" />
                            <span className={`absolute -top-px left-[46px] border-l border-dotted border-[#aaa] ${row.last ? 'h-[10px]' : 'h-5'}`} />
                        </>
                    )}
                    {(row?.level === 1 || row?.level === 2) && (
                        <button aria-label={`Collapse ${row.name}`} className="flex h-2 w-2 items-center border border-[#ddd]">
                            <span className="h-px w-full bg-[#444]" />
                        </button>
                    )}
                    {row && row.level >= 2 && <span className={row.level === 3 ? 'pl-[14px]' : 'pl-1'}><TreeCheck name={row.name} /></span>}
                    {row && <Small name={row.icon} />}
                    {row && (row.level >= 2 ? <label htmlFor={`chk-${row.name}`}>{row.name}</label> : <span>{row.name}</span>)}
                </div>
            </td>
            <td className="border-r border-[#ececec] p-0" />
            <td className="overflow-hidden p-0 pl-1 whitespace-nowrap">{row?.env}</td>
        </tr>
    );
}

function Navigator() {
    const blanks = Array.from({ length: 5 });
    return (
        <section className="flex w-[320px] shrink-0 flex-col border-r border-[#9a9a9a] bg-[#fdfdfd] pr-[9px] pl-[6px] text-[#444]">
            <div className="flex h-7 shrink-0 items-center justify-between pr-[6px] pl-[3px]">
                <h2 className="text-[11px]">Motion Navigator</h2>
                <button aria-label="Maximize" className="h-[10px] w-[11px] border border-t-2 border-[#222]" />
            </div>
            <div className="min-h-0 flex-1 overflow-hidden">
                <table className="h-[412px] w-full table-fixed border-collapse text-[11px] leading-4">
                    <thead className="bg-[#efefef] text-left">
                        <tr className="h-[18px] border-y border-[#dedede]">
                            <th className="w-[151px] border-r border-[#dcdcdc] p-0 pl-[7px] font-normal">Name</th>
                            <th className="w-[94px] border-r border-[#dcdcdc] p-0 pl-[6px] font-normal">Status</th>
                            <th className="overflow-hidden p-0 pl-[6px] font-normal">Environment</th>
                        </tr>
                    </thead>
                    <tbody>
                        {rows.map((row) => <NavigatorRow key={row.name} row={row} />)}
                        {blanks.map((_, i) => <NavigatorRow key={i} />)}
                    </tbody>
                </table>
            </div>
            <div className="flex h-4 shrink-0 items-center justify-between bg-[#ececec] px-[6px]">
                <svg width="5" height="7" viewBox="0 0 5 7" aria-hidden="true"><path d="M4 0v7L0 3.5z" fill="#333" /></svg>
                <div className="mr-auto ml-[7px] flex h-[14px] w-[99px] items-center justify-center gap-[2px] border border-[#999] bg-linear-to-b from-[#f4f4f4] to-[#cfcfcf]">
                    <span className="h-[5px] w-px bg-[#555]" />
                    <span className="h-[5px] w-px bg-[#555]" />
                    <span className="h-[5px] w-px bg-[#555]" />
                </div>
                <svg width="5" height="7" viewBox="0 0 5 7" aria-hidden="true"><path d="M1 0v7L5 3.5z" fill="#333" /></svg>
            </div>
            <div className="mt-[2px] h-1 shrink-0 bg-[#c9c9c9]" />
            {['Preview', 'Mode Shape Details View'].map((title) => (
                <button key={title} className="flex h-[23px] shrink-0 items-center justify-between border-b-2 border-[#d0d0d0] pt-[3px] pr-[5px] pl-[6px] text-[12px] text-[#5a93a6]">
                    {title}
                    <svg width="11" height="9" viewBox="0 0 11 9" fill="none" aria-hidden="true"><path d="M1 1l4.5 6L10 1" stroke="#4d8f94" strokeWidth="2" /></svg>
                </button>
            ))}
            <div className="h-[6px] shrink-0" />
        </section>
    );
}

function Button3D({ x, y }: { x: number; y: number }) {
    return (
        <g transform={`translate(${x} ${y})`}>
            <ellipse cx="3" cy="-1" rx="12" ry="14.5" fill="#dcd50f" stroke="#5a5608" transform="rotate(-18)" />
            <ellipse cx="0" cy="0" rx="12" ry="14.5" fill="#f0e712" stroke="#6d680a" strokeWidth="0.8" transform="rotate(-18)" />
            <ellipse cx="-1" cy="1" rx="10.500" ry="12.5" fill="#ddd31a" stroke="#8e850f" strokeWidth="0.6" transform="rotate(-18)" />
            <path d="M-9 4L1 -5L9 4Q3 13 -6 10z" fill="#c0941c" opacity="0.7" />
        </g>
    );
}

function Viewport() {
    return (
        <main className="relative min-w-0 flex-1 overflow-hidden bg-linear-to-b from-[#b2b2b4] via-[#cccdd0] via-35% to-[#e7e7ea] to-80%">
            <svg viewBox="350 175 930 506" preserveAspectRatio="xMinYMin slice" className="absolute inset-0 h-full w-full" fill="none" aria-label="Cad mechanism model">
                <defs>
                    <linearGradient id="rod" gradientUnits="userSpaceOnUse" x1="845" y1="438" x2="863" y2="464">
                        <stop offset="0" stopColor="#d90808" />
                        <stop offset="0.25" stopColor="#ff0a14" />
                        <stop offset="0.65" stopColor="#f20610" />
                        <stop offset="1" stopColor="#6e0206" />
                    </linearGradient>
                    <linearGradient id="fillet" gradientUnits="userSpaceOnUse" x1="745" y1="523" x2="768" y2="560">
                        <stop offset="0" stopColor="#14dcca" />
                        <stop offset="1" stopColor="#19ffff" />
                    </linearGradient>
                    <linearGradient id="hole" x1="0" x2="1">
                        <stop offset="0" stopColor="#14c2b4" />
                        <stop offset="1" stopColor="#0b6f68" />
                    </linearGradient>
                </defs>

                {/* driver symbol and rod */}
                <g fontFamily="Liberation Sans, sans-serif" fontSize="12" fill="#8b8c80">
                    <text x="952" y="386">002</text>
                    <text x="755" y="409">3</text>
                    <text x="761" y="465">2</text>
                </g>
                <path d="M915 391L899 371L916 378Q919 363 932 363Q957 372 963 400L956 415L951 410L957 399Q948 371 932 368Q921 372 922 383" stroke="#6f5224" strokeWidth="3" strokeLinejoin="round" />
                <path d="M915 391L899 371L916 378Q919 363 932 363Q957 372 963 400L956 415L951 410L957 399Q948 371 932 368Q921 372 922 383" stroke="#cda964" strokeWidth="1.5" strokeLinejoin="round" />
                <path d="M764 503L930 378Q939 375 946 384Q951 393 948 400L775 528L776 535L764 528z" fill="url(#rod)" stroke="#7a0509" strokeWidth="0.8" />
                <path d="M758 413L760 428" stroke="#222" />

                <g stroke="#0c4b4a" strokeWidth="0.9" strokeLinejoin="round">
                    {/* slot back wall and lower leg interiors */}
                    <path d="M673 403L706 419V440H673z" fill="#0e9a8d" stroke="none" />
                    <path d="M683 572L717 586L721 683H688z" fill="#12dcc8" />
                    <path d="M733 618L745 612L771 625L773 683H736z" fill="#12dcc8" />
                    {/* front faces */}
                    <path d="M657 378L721 408L727 530Q731 561 752 570L936 659L937 683H892L771 626L752 615Q737 610 734 626L736 683H721L717 589L737 576L714 563L706 419L673 403L679 505L681 544L683 574L688 683H674L668 590Q665 572 645 562L540 512L461 476L459 431L637 518Q656 526 664 508L663 492L659 430z" fill="#10a899" />
                    <path d="M679 495L712 478L714 530L681 545z" fill="#12dcc8" />
                    {/* left arm */}
                    <path d="M495 405L644 477L664 490V508Q656 526 637 518L459 431z" fill="#19ffff" />
                    <path d="M646 518L664 506" />
                    <path d="M538 479L638 527V552L541 505z" fill="#19ffff" />
                    <path d="M538 479L560 490L541 505z" fill="#12d6c8" />
                    <ellipse cx="502" cy="430" rx="14" ry="8.5" fill="url(#hole)" />
                    {/* column */}
                    <path d="M657 378L693 352L756 382L721 408z" fill="#19ffff" />
                    <path d="M721 408L756 382L760 430L764 513L729 537z" fill="#12dcc8" />
                    <path d="M729 537L764 513Q767 532 786 545L752 570Q731 560 729 537z" fill="url(#fillet)" />
                    {/* right arm */}
                    <path d="M786 545L972 633L936 659L752 570z" fill="#19ffff" />
                    <path d="M936 659L972 633L975 683H937z" fill="#12dcc8" />
                    <path d="M717 589L737 576L858 632V656z" fill="#19ffff" />
                    <ellipse cx="928" cy="634.5" rx="14" ry="8.5" fill="url(#hole)" />
                </g>

                {/* sliders */}
                <g stroke="#06304f" strokeWidth="0.6">
                    <path d="M638 527L681 544V572L638 552z" fill="#0a4a78" />
                    <path d="M681 544L712 523L714 547L702 556z" fill="#1670aa" />
                    <path d="M681 544L702 556L704 580L682 571z" fill="#0a4a78" />
                    <path d="M702 556L714 547L720 568L704 580z" fill="#08406c" />
                    <path d="M644 431L673 408L707 420L680 447z" fill="#1468a4" />
                    <path d="M644 431L680 447V505L647 490z" fill="#0a4f80" />
                    <path d="M680 447L707 420L710 484L680 505z" fill="#085381" />
                </g>
                <path d="M678 417V391M689 416V392M678 394L689 410M683 467h5M685 464v6" stroke="#a0703a" strokeWidth="1.2" />
                <Button3D x={660} y={470} />
                <Button3D x={667} y={555} />
                <text x="705" y="582" fontFamily="Liberation Sans, sans-serif" fontSize="12" fill="#5f9c80">L005</text>

                {/* view triad */}
                <g>
                    <path d="M394 617L408 626V641L395 649L382 641V627z" fill="#cfd0d1" stroke="#b4b5b7" />
                    <path d="M382 627L395 634L408 626M395 634V649" stroke="#dedede" strokeWidth="1.5" />
                    <path d="M393 622V616M383 641L378 645M406 640L412 643M394 632V620M394 632L383 640M394 632L406 640" stroke="#8a8a8a" />
                    <path d="M393 608L396 616H390z" fill="#2d6a38" />
                    <path d="M374 647L382 640L384 645z" fill="#3440c9" />
                    <path d="M417 645L408 639L407 643z" fill="#a32536" />
                    <g fontFamily="Liberation Sans, sans-serif" fontSize="11">
                        <text x="389" y="609" fill="#87a08b">Y</text>
                        <text x="416" y="651" fill="#c0606c">X</text>
                        <text x="368" y="655" fill="#5157c9">Z</text>
                    </g>
                </g>
            </svg>
            <h2 className="absolute top-[45px] left-[185px] font-['Liberation_Sans',sans-serif] text-[37px] leading-12 text-black [text-shadow:2px_2px_3px_#555]">Cad mechanism</h2>
        </main>
    );
}

export default function App() {
    return (
        <div className="flex h-screen flex-col bg-black px-px py-[18px] font-['Open_Sans','Noto_Sans',sans-serif]">
            <TitleBar />
            <TabBar />
            <Ribbon />
            <SelectionBar />
            <div className="relative flex min-h-0 flex-1">
                <SideBar />
                <Navigator />
                <Viewport />
                <svg width="12" height="19" viewBox="0 0 12 19" className="pointer-events-none absolute top-[3px] left-[235px]" aria-hidden="true">
                    <path d="M1 1v14l3-3 3 6 2-1-2-6h4z" fill="#fff" stroke="#444" />
                </svg>
            </div>
            <footer className="flex h-[21px] shrink-0 items-center border-t border-[#aaa] bg-[#fdfdfd] pb-[2px] text-[10px] text-[#333]">
                <strong className="flex-1 pl-[146px] text-center">Joint edited - Gruebler count = -7</strong>
                <button aria-label="Full Screen" className="mr-[50px]">
                    <Svg s={14}><path d="M2 10V2h8M31 2h8v8M39 31v8h-8M10 39H2v-8" stroke="#777" strokeWidth="3" /><path d="M9 9h23v22H9z" fill="#c8cfdd" stroke="#3f4a6b" strokeWidth="4" /></Svg>
                </button>
            </footer>
        </div>
    );
}
